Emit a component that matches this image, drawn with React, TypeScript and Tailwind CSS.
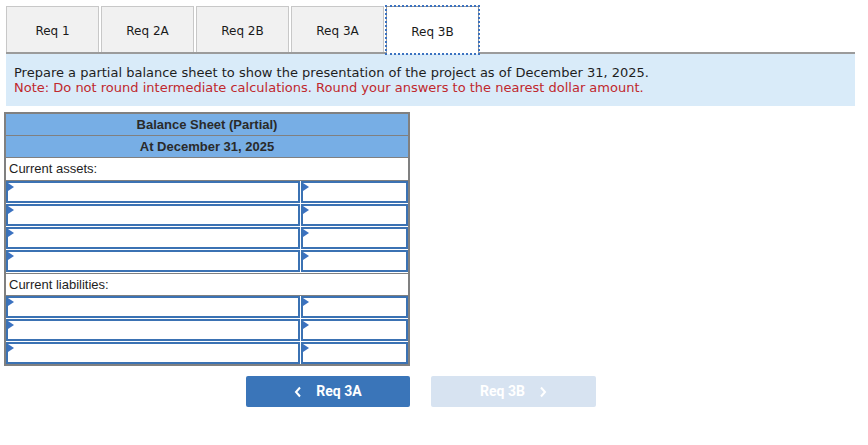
const tabs = ["Req 1", "Req 2A", "Req 2B", "Req 3A", "Req 3B"];

function Marker() {
  return (
    <svg
      className="absolute left-0 top-0"
      width="6"
      height="8"
      viewBox="0 0 6 8"
    >
      <path d="M0 0 L6 4 L0 8 Z" fill="#3b72c0" />
    </svg>
  );
}

function InputRow({ last = false }: { last?: boolean }) {
  return (
    <div
      className={`flex gap-px ${last ? "h-[22px]" : "h-[23px] border-b border-white"}`}
    >
      <div className="relative w-[294px] border-2 border-[#3b72b3] bg-white">
        <Marker />
      </div>
      <div className="relative flex-1 border-2 border-[#3b72b3] bg-white">
        <Marker />
      </div>
    </div>
  );
}

export default function App() {
  return (
    <div className="h-[445px] w-[868px] bg-white">
      <div className="ml-[6px] w-[849px] pt-[6px]">
        <div className="flex gap-[2px] border-b-2 border-[#9b9b9b] font-['DejaVu_Sans',sans-serif] text-[12px] text-[#1a1a1a]">
          {tabs.map((t) => {
            const active = t === "Req 3B";
            return (
              <div
                key={t}
                className={`flex w-[93px] items-center justify-center border border-b-0 pt-[2px] ${
                  active
                    ? "-mb-[2px] h-[48px] border-[#9b9b9b] bg-white outline-2 outline-dotted outline-[#3b72c0] -outline-offset-1"
                    : "h-[46px] border-[#c8c8c8] bg-[#f1f1f1]"
                }`}
              >
                {t}
              </div>
            );
          })}
        </div>
        <div className="h-[52px] bg-[#d9ebf9] px-[8px] pt-[11px] font-['DejaVu_Sans',sans-serif] text-[13px] leading-[15px]">
          <p className="text-[#1e1e1e]">
            Prepare a partial balance sheet to show the presentation of the
            project as of December 31, 2025.
          </p>
          <p className="text-[#c0282d]">
            Note: Do not round intermediate calculations. Round your answers to
            the nearest dollar amount.
          </p>
        </div>
      </div>

      <div className="ml-[4px] mt-[6px] w-[406px] border-2 border-[#808080] font-['Liberation_Sans',Arial,sans-serif]">
        <div className="flex h-[22px] items-center justify-center border-b border-[#808080] bg-[#77aee5] text-[13px] font-bold text-[#2a2a2a]">
          Balance Sheet (Partial)
        </div>
        <div className="flex h-[22px] items-center justify-center border-b border-[#808080] bg-[#77aee5] text-[13px] font-bold text-[#2a2a2a]">
          At December 31, 2025
        </div>
        <div className="flex h-[23px] items-center border-b border-[#808080] px-[3px] text-[13px] text-[#1e1e1e]">
          Current assets:
        </div>
        <InputRow />
        <InputRow />
        <InputRow />
        <InputRow />
        <div className="flex h-[23px] items-center border-y border-[#808080] px-[3px] text-[13px] text-[#1e1e1e]">
          Current liabilities:
        </div>
        <InputRow />
        <InputRow />
        <InputRow last />
      </div>

      <div className="ml-[246px] mt-[10px] flex gap-[21px] font-['Roboto',sans-serif] text-[14px] font-bold text-white">
        <button className="flex h-[31px] w-[164px] items-center justify-center gap-[14px] rounded-[2px] bg-[#3a75b9]">
          <svg width="8" height="12" viewBox="0 0 8 12">
            <path
              d="M6 1.5 L2 6 L6 10.5"
              fill="none"
              stroke="white"
              strokeWidth="2"
            />
          </svg>
          <span>Req 3A</span>
        </button>
        <button className="flex h-[31px] w-[165px] items-center justify-center gap-[14px] rounded-[2px] bg-[#d7e3f1]">
          <span>Req 3B</span>
          <svg width="8" height="12" viewBox="0 0 8 12">
            <path
              d="M2 1.5 L6 6 L2 10.5"
              fill="none"
              stroke="white"
              strokeWidth="2"
            />
          </svg>
        </button>
      </div>
    </div>
  );
}
